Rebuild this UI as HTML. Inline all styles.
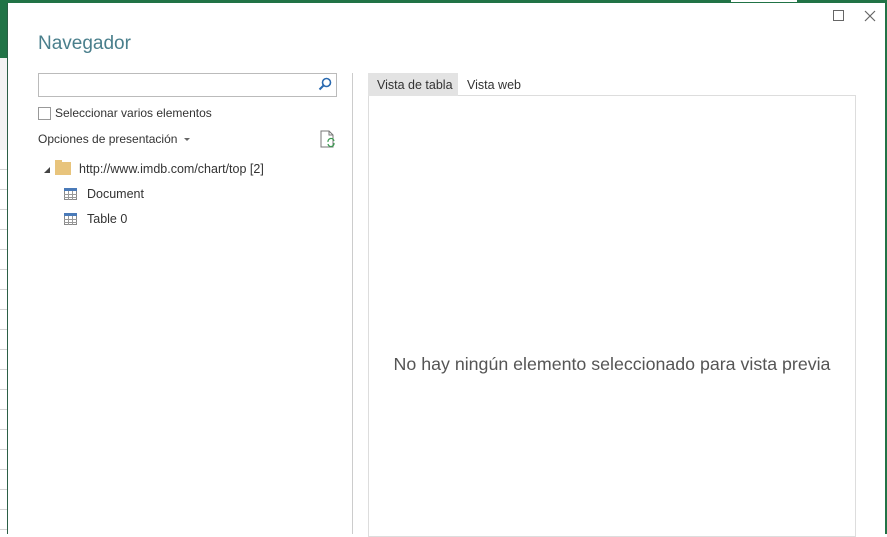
<!DOCTYPE html><html><head><style>
body{margin:0;width:887px;height:534px;position:relative;overflow:hidden;background:#fff;font-family:"Segoe UI","Liberation Sans",sans-serif;}
.a{position:absolute}
</style></head><body>
<div class="a" style="left:0;top:0;width:887px;height:3px;background:#217346"></div>
<div class="a" style="left:731px;top:0;width:66px;height:2px;background:#fff"></div>
<div class="a" style="left:885px;top:0;width:2px;height:534px;background:#217346"></div>
<div class="a" style="left:0;top:0;width:7px;height:58px;background:#217346"></div>
<div class="a" style="left:0;top:58px;width:7px;height:92px;background:#f3f3f3"></div>
<div class="a" style="left:0;top:150px;width:7px;height:384px;background:repeating-linear-gradient(#fff 0,#fff 19px,#d4d4d4 19px,#d4d4d4 20px)"></div>
<div class="a" style="left:7px;top:3px;width:1px;height:531px;background:#2b5e45"></div>
<div class="a" style="left:8px;top:3px;width:877px;height:531px;background:#fff"></div>
<div class="a" style="left:833px;top:10px;width:9px;height:9px;border:1px solid #666"></div>
<svg class="a" style="left:864px;top:10px" width="12" height="12"><path d="M1 1L11 11M11 1L1 11" stroke="#666" stroke-width="1.2"/></svg>
<div class="a" style="left:38px;top:33px;font-size:19px;color:#4a7f8c">Navegador</div>
<div class="a" style="left:38px;top:73px;width:297px;height:22px;border:1px solid #bbb"></div>
<svg class="a" style="left:318px;top:77px" width="14" height="14"><circle cx="8.5" cy="5.5" r="4" fill="none" stroke="#2a6ab0" stroke-width="1.6"/><path d="M5.5 8.5L1.5 12.5" stroke="#2a6ab0" stroke-width="2"/></svg>
<div class="a" style="left:38px;top:107px;width:11px;height:11px;border:1px solid #999"></div>
<div class="a" style="left:55px;top:106px;font-size:12px;color:#333">Seleccionar varios elementos</div>
<div class="a" style="left:38px;top:132px;font-size:12px;color:#333">Opciones de presentación</div>
<div class="a" style="left:184px;top:138px;border:3px solid transparent;border-top:3px solid #666;"></div>
<svg class="a" style="left:320px;top:130px" width="16" height="18"><path d="M1 1h8l4 4v12H1z" fill="#fff" stroke="#777"/><path d="M9 1v4h4" fill="none" stroke="#777"/><path d="M8 12a3 3 0 0 1 6 -1M14 13a3 3 0 0 1-6 1" fill="none" stroke="#3a9a50" stroke-width="1.2"/></svg>
<div class="a" style="left:44px;top:167px;border-left:6px solid transparent;border-bottom:6px solid #444"></div>
<div class="a" style="left:55px;top:162px;width:16px;height:13px;background:#e8c47c"></div>
<div class="a" style="left:55px;top:160px;width:7px;height:3px;background:#e8c47c"></div>
<div class="a" style="left:79px;top:162px;font-size:12.5px;color:#333">http://www.imdb.com/chart/top [2]</div>
<svg class="a" style="left:64px;top:188px" width="13" height="12"><rect x=".5" y=".5" width="12" height="11" fill="#fff" stroke="#888"/><rect x="0" y="0" width="13" height="3" fill="#4a7ab8"/><path d="M4.5 3v9M8.5 3v9M0 6.5h13M0 9.5h13" stroke="#999"/></svg>
<div class="a" style="left:87px;top:187px;font-size:12.5px;color:#333">Document</div>
<svg class="a" style="left:64px;top:213px" width="13" height="12"><rect x=".5" y=".5" width="12" height="11" fill="#fff" stroke="#888"/><rect x="0" y="0" width="13" height="3" fill="#4a7ab8"/><path d="M4.5 3v9M8.5 3v9M0 6.5h13M0 9.5h13" stroke="#999"/></svg>
<div class="a" style="left:87px;top:212px;font-size:12.5px;color:#333">Table 0</div>
<div class="a" style="left:352px;top:73px;width:1px;height:461px;background:#ccc"></div>
<div class="a" style="left:368px;top:95px;width:486px;height:440px;border:1px solid #ddd"></div>
<div class="a" style="left:368px;top:73px;width:90px;height:23px;background:#e3e3e3"></div>
<div class="a" style="left:377px;top:78px;font-size:12.5px;color:#333">Vista de tabla</div>
<div class="a" style="left:467px;top:78px;font-size:12.5px;color:#333">Vista web</div>
<div class="a" style="left:368px;top:354px;width:488px;text-align:center;font-size:17.8px;color:#555">No hay ningún elemento seleccionado para vista previa</div>
</body></html>
